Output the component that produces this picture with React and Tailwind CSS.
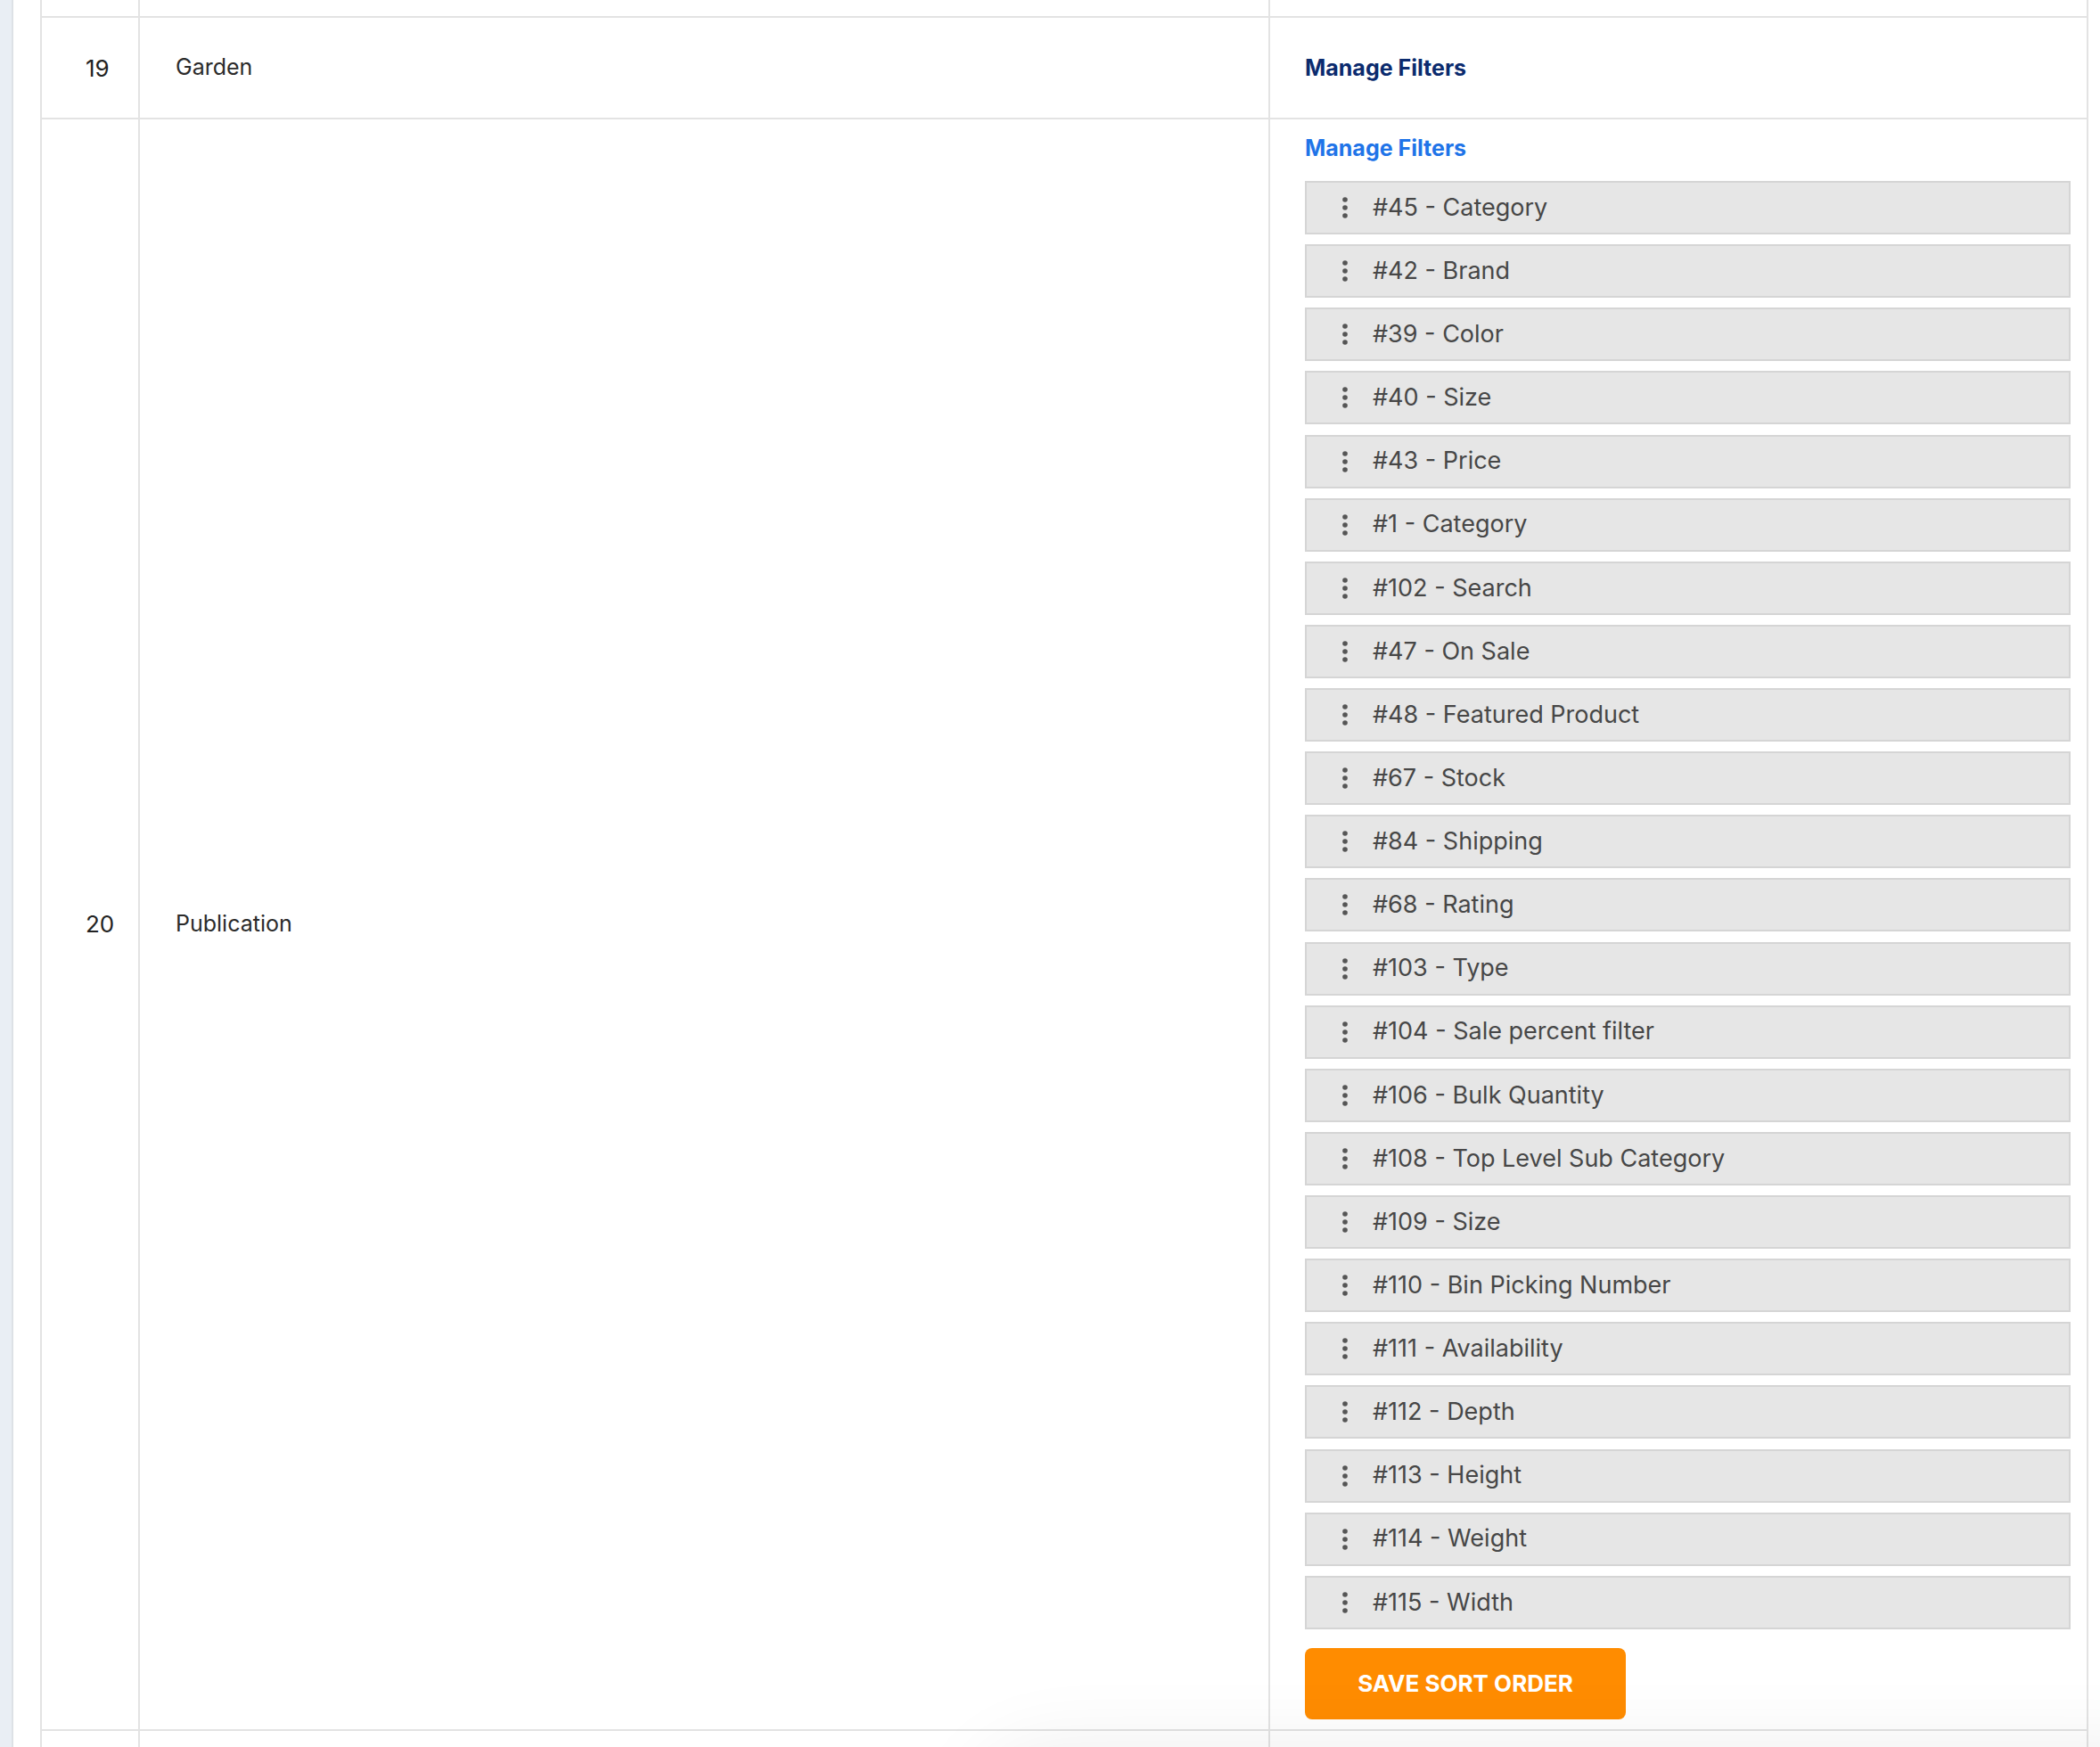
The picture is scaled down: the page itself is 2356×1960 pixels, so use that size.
import React from "react";

const filters = [
  "#45 - Category",
  "#42 - Brand",
  "#39 - Color",
  "#40 - Size",
  "#43 - Price",
  "#1 - Category",
  "#102 - Search",
  "#47 - On Sale",
  "#48 - Featured Product",
  "#67 - Stock",
  "#84 - Shipping",
  "#68 - Rating",
  "#103 - Type",
  "#104 - Sale percent filter",
  "#106 - Bulk Quantity",
  "#108 - Top Level Sub Category",
  "#109 - Size",
  "#110 - Bin Picking Number",
  "#111 - Availability",
  "#112 - Depth",
  "#113 - Height",
  "#114 - Weight",
  "#115 - Width",
];

const DragHandle = () => (
  <svg width="6" height="24" viewBox="0 0 6 24" className="shrink-0">
    <circle cx="3" cy="3" r="2.8" fill="#555" />
    <circle cx="3" cy="12" r="2.8" fill="#555" />
    <circle cx="3" cy="21" r="2.8" fill="#555" />
  </svg>
);

const Row = ({ id, name, children, className = "" }) => (
  <div className={`flex border-b-2 border-[#e3e3e3] ${className}`}>
    <div className="w-[110px] shrink-0 border-r-2 border-[#e3e3e3] flex items-center pl-[49px] text-[26px] text-[#222]">
      {id}
    </div>
    <div className="w-[1268px] shrink-0 border-r-2 border-[#e3e3e3] flex items-center pl-[40px] text-[25px] text-[#2b2b2b]">
      {name}
    </div>
    <div className="flex-1 pl-[39px] pr-[18px]">{children}</div>
  </div>
);

const App = () => {
  return (
    <div className="relative h-[1960px] overflow-hidden bg-white font-['Inter',sans-serif]">
      <div className="flex h-full">
        {/* sidebar edge */}
        <div className="w-[15px] shrink-0 bg-[#e9eef4] border-r-2 border-[#dde1e6]" />

        <div className="flex-1 pl-[30px] pr-[13px]">
          <div className="border-l-2 border-r-2 border-[#e3e3e3]">
            {/* previous row, cut off */}
            <Row className="h-[20px]" />

            <Row id="19" name="Garden" className="h-[114px]">
              <div className="flex h-full items-center">
                <a className="text-[25px] leading-[36px] font-bold text-[#0b2b6e]">
                  Manage Filters
                </a>
              </div>
            </Row>

            <Row id="20" name="Publication">
              <div className="pt-[14px] pb-[11px]">
                <a className="block text-[25px] leading-[36px] font-bold text-[#1f74e8]">
                  Manage Filters
                </a>
                <ul className="mt-[19px] flex flex-col gap-[11.14px]">
                  {filters.map((f, i) => (
                    <li
                      key={i}
                      className="h-[60px] flex items-center gap-[28px] pl-[40px] border-2 border-[#d5d5d5] bg-[#e6e6e6] text-[27px] text-[#474747]"
                    >
                      <DragHandle />
                      <span>{f}</span>
                    </li>
                  ))}
                </ul>
                <button className="mt-[21px] w-[360px] h-[80px] rounded-[8px] bg-[#ff8c00] text-white text-[26px] font-bold uppercase">
                  Save Sort Order
                </button>
              </div>
            </Row>

            {/* next row, cut off */}
            <Row className="h-[100px]" />
          </div>
        </div>
      </div>

      {/* soft shadow from a floating element below the fold */}
      <div className="absolute left-[1120px] -right-[100px] top-[1990px] h-[120px] rounded-full shadow-[0_0_90px_30px_rgba(0,0,0,0.07)]" />
    </div>
  );
};

export default App;
